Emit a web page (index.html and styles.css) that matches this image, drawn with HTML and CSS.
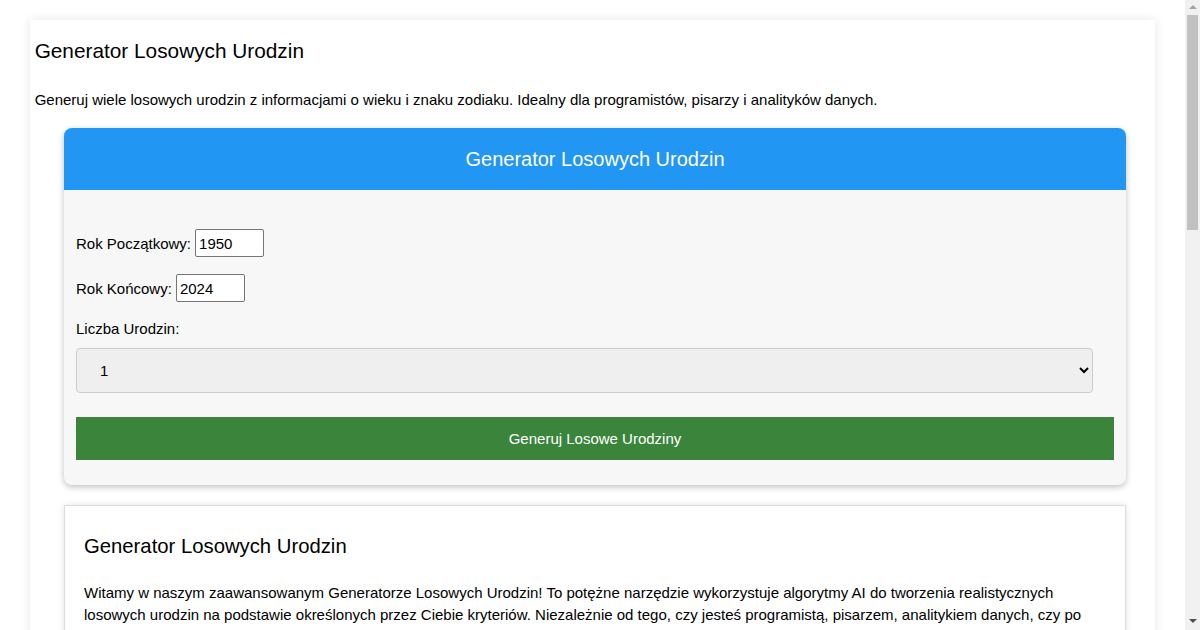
FILE: index.html
```html
<!DOCTYPE html>
<html lang="pl">
<head>
<meta charset="utf-8">
<title>Generator Losowych Urodzin</title>
<link rel="stylesheet" href="styles.css">
</head>
<body>
<div class="container">
  <h1 class="page-title">Generator Losowych Urodzin</h1>
  <p class="intro">Generuj wiele losowych urodzin z informacjami o wieku i znaku zodiaku. Idealny dla programistów, pisarzy i analityków danych.</p>

  <div class="tool-card">
    <div class="tool-header">Generator Losowych Urodzin</div>
    <div class="tool-body">
      <div class="row">
        <label for="start">Rok Początkowy:</label>
        <input class="year-input" type="number" id="start" value="1950">
      </div>
      <div class="row row-second">
        <label for="end">Rok Końcowy:</label>
        <input class="year-input" type="number" id="end" value="2024">
      </div>
      <label class="count-label" for="count">Liczba Urodzin:</label>
      <select class="count-select" id="count">
        <option>1</option>
        <option>5</option>
        <option>10</option>
        <option>20</option>
      </select>
      <button class="gen-btn" type="button">Generuj Losowe Urodziny</button>
    </div>
  </div>

  <div class="info-card">
    <h2 class="info-title">Generator Losowych Urodzin</h2>
    <p class="info-text">Witamy w naszym zaawansowanym Generatorze Losowych Urodzin! To potężne narzędzie wykorzystuje algorytmy AI do tworzenia realistycznych losowych urodzin na podstawie określonych przez Ciebie kryteriów. Niezależnie od tego, czy jesteś programistą, pisarzem, analitykiem danych, czy po prostu kimś, kto potrzebuje przykładowych dat urodzenia, nasze narzędzie szybko dostarczy Ci wiarygodnych wyników wraz z informacjami o wieku i znaku zodiaku.</p>
    <p class="info-text">Wybierz zakres lat, określ liczbę urodzin, które chcesz wygenerować, a następnie kliknij przycisk, aby otrzymać listę losowych dat. Każdy wynik zawiera dokładną datę urodzenia, obliczony wiek oraz odpowiadający mu znak zodiaku.</p>
  </div>
</div>

<div class="scrollbar" aria-hidden="true">
  <div class="sb-arrow sb-up"></div>
  <div class="sb-thumb"></div>
  <div class="sb-arrow sb-down"></div>
</div>
</body>
</html>
```

FILE: styles.css
```css
html {
  margin: 0;
  padding: 0;
  background: #fff;
}

body {
  margin: 0 15px 0 0;
  padding: 0;
  background: #fff;
  font-family: "Liberation Sans", Arial, sans-serif;
  color: #000;
  font-size: 15px;
}

.container {
  width: 95%;
  margin: 20px auto;
  padding: 5px 0 20px 5px;
  box-sizing: border-box;
  background: #fff;
  box-shadow: 0 0 10px rgba(0, 0, 0, 0.1);
}

.page-title {
  font-size: 20.8px;
  font-weight: normal;
  line-height: 24px;
  margin: 14px 0 0 0;
}

.intro {
  font-size: 15px;
  line-height: 22px;
  margin: 26px 0 0 0;
}

.tool-card {
  max-width: 1062px;
  margin: 17px auto 0 auto;
  border-radius: 8px;
  background: #f7f7f7;
  box-shadow: 0 2px 6px rgba(0, 0, 0, 0.25);
  overflow: hidden;
}

.tool-header {
  background: #2196f3;
  color: #fff;
  text-align: center;
  font-size: 20px;
  line-height: 23px;
  padding: 19.5px 0;
}

.tool-body {
  display: flex;
  flex-direction: column;
  align-items: flex-start;
  padding: 39px 12px 25px 12px;
}

.row {
  display: flex;
  align-items: center;
  gap: 4px;
  font-size: 15px;
}

.row-second {
  margin-top: 17px;
}

.year-input {
  width: 69px;
  height: 28px;
  box-sizing: border-box;
  border: 1px solid #767676;
  border-radius: 2px;
  padding: 1px 3px;
  font-family: "Liberation Sans", Arial, sans-serif;
  font-size: 15px;
  color: #000;
  background: #fff;
  -moz-appearance: textfield;
}

.year-input::-webkit-outer-spin-button,
.year-input::-webkit-inner-spin-button {
  -webkit-appearance: none;
  margin: 0;
}

.count-label {
  margin-top: 18px;
  line-height: 17px;
}

.count-select {
  margin-top: 11px;
  width: 98%;
  height: 45px;
  box-sizing: border-box;
  border: 1px solid #ccc;
  border-radius: 4px;
  background: #efefef;
  padding: 0 19px;
  font-family: "Liberation Sans", Arial, sans-serif;
  font-size: 15px;
  color: #000;
}

.gen-btn {
  margin-top: 24px;
  width: 100%;
  height: 43px;
  border: none;
  background: #3b843b;
  color: #fff;
  font-family: "Liberation Sans", Arial, sans-serif;
  font-size: 15px;
  cursor: pointer;
}

.info-card {
  max-width: 1062px;
  margin: 20px auto 0 auto;
  box-sizing: border-box;
  background: #fff;
  border: 1px solid #ddd;
  box-shadow: 0 0 6px rgba(0, 0, 0, 0.12);
  padding: 20px 20px 20px 19px;
}

.info-title {
  font-size: 20.3px;
  font-weight: normal;
  line-height: 23px;
  margin: 8.5px 0 0 0;
}

.info-text {
  font-size: 15px;
  line-height: 22px;
  margin: 24.5px 0 0 0;
}

/* imitation of the browser's classic vertical scrollbar */
.scrollbar {
  position: fixed;
  top: 0;
  right: 0;
  width: 15px;
  height: 100vh;
  background: #f1f1f1;
  display: flex;
  flex-direction: column;
  align-items: center;
}

.sb-arrow {
  width: 0;
  height: 0;
  border-left: 4px solid transparent;
  border-right: 4px solid transparent;
}

.sb-up {
  margin-top: 5px;
  border-bottom: 4px solid #a3a3a3;
}

.sb-thumb {
  margin-top: 6px;
  height: 215px;
  background: #c1c1c1;
  margin-left: 2px;
  margin-right: 2px;
  align-self: stretch;
}

.sb-down {
  margin-top: auto;
  margin-bottom: 7px;
  border-top: 4px solid #505050;
}
```
